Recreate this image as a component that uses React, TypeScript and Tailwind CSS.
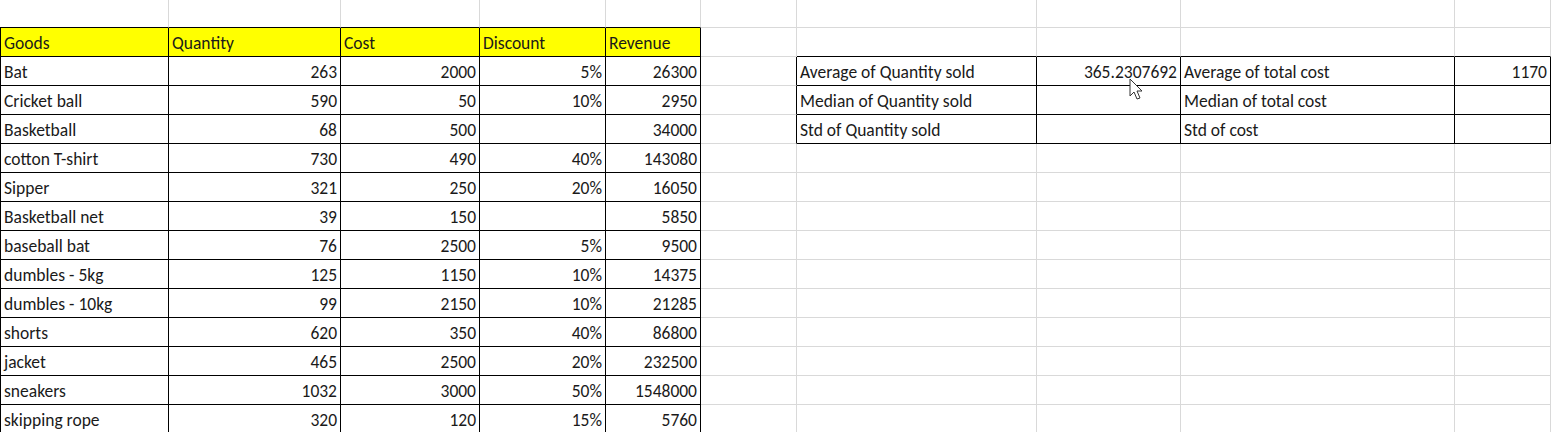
import React from "react";

const W = [169, 172, 139, 126, 95, 96, 240, 144, 274, 96];
type Cell = { t: string; r?: boolean };
const data: string[][] = [
  ["Bat", "263", "2000", "5%", "26300"],
  ["Cricket ball", "590", "50", "10%", "2950"],
  ["Basketball", "68", "500", "", "34000"],
  ["cotton T-shirt", "730", "490", "40%", "143080"],
  ["Sipper", "321", "250", "20%", "16050"],
  ["Basketball net", "39", "150", "", "5850"],
  ["baseball bat", "76", "2500", "5%", "9500"],
  ["dumbles - 5kg", "125", "1150", "10%", "14375"],
  ["dumbles - 10kg", "99", "2150", "10%", "21285"],
  ["shorts", "620", "350", "40%", "86800"],
  ["jacket", "465", "2500", "20%", "232500"],
  ["sneakers", "1032", "3000", "50%", "1548000"],
  ["skipping rope", "320", "120", "15%", "5760"],
];
const side: [string, string, string, string][] = [
  ["Average of Quantity sold", "365.2307692", "Average of total cost", "1170"],
  ["Median of Quantity sold", "", "Median of total cost", ""],
  ["Std of Quantity sold", "", "Std of cost", ""],
];

function inTable(r: number, c: number) {
  if (r >= 1 && r <= 14 && c >= 0 && c <= 4) return true;
  if (r >= 2 && r <= 4 && c >= 6 && c <= 9) return true;
  return false;
}

function cellAt(r: number, c: number): Cell {
  if (r === 1 && c <= 4) return { t: ["Goods", "Quantity", "Cost", "Discount", "Revenue"][c] };
  if (r >= 2 && r <= 14 && c <= 4) return { t: data[r - 2][c], r: c > 0 };
  if (r >= 2 && r <= 4 && c >= 6) {
    const s = side[r - 2][c - 6];
    return { t: s, r: c === 7 || c === 9 };
  }
  return { t: "" };
}

export default function App() {
  const rows = Array.from({ length: 16 }, (_, i) => i);
  return (
    <div className="w-[1552px] h-[432px] overflow-hidden bg-white relative" style={{ fontFamily: "Calibri, Carlito, 'Open Sans', sans-serif" }}>
      {rows.map((r) => (
        <div key={r} className={`flex ${r === 0 ? "h-[28px]" : "h-[29px]"}`}>
          {W.map((w, c) => {
            const cell = cellAt(r, c);
            const rb = inTable(r, c) || inTable(r, c + 1);
            const bb = inTable(r, c) || inTable(r + 1, c);
            const yellow = r === 1 && c <= 4;
            return (
              <div
                key={c}
                style={{ width: w }}
                className={`shrink-0 h-full border-r border-b flex items-end pb-[1px] text-[17.5px] leading-none whitespace-nowrap overflow-visible ${rb ? "border-r-black" : "border-r-[#d9d9d9]"} ${bb ? "border-b-black" : "border-b-[#d9d9d9]"} ${yellow ? "bg-[#ffff00]" : ""} ${cell.r ? "justify-end pr-[3px]" : "pl-[3px]"} ${c === 0 && inTable(r, 0) ? "border-l border-l-black" : ""} text-[#1a1a1a]`}
              >
                <span className="pb-[3px]">{cell.t}</span>
              </div>
            );
          })}
        </div>
      ))}
      <svg className="absolute left-[1129px] top-[78px]" width="16" height="24" viewBox="0 0 16 24">
        <path d="M1 1 L1 18 L5 14 L8 21 L11 20 L8 13 L13 13 Z" fill="white" stroke="#333" strokeWidth="1" />
      </svg>
    </div>
  );
}
